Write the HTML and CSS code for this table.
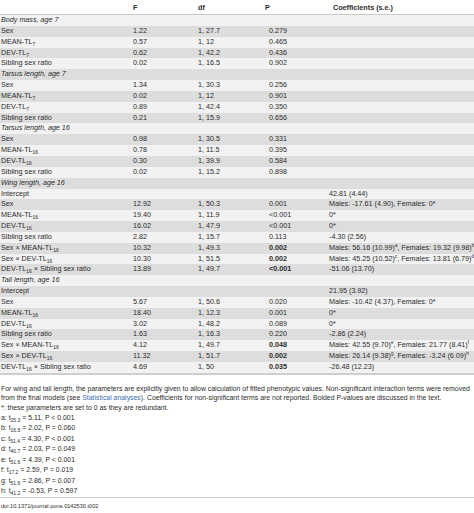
FILE: index.html
```html
<!DOCTYPE html>
<html>
<head>
<meta charset="utf-8">
<link rel="stylesheet" href="styles.css">
</head>
<body>
<div class="table">
  <div class="hdr">
    <div class="c1"></div>
    <div class="c2">F</div>
    <div class="c3">df</div>
    <div class="c4h">P</div>
    <div class="c5h">Coefficients (s.e.)</div>
  </div>
  <div class="rows">
    <div class="row"><div class="c1 sec">Body mass, age 7</div></div>
    <div class="row"><div class="c1">Sex</div><div class="c2">1.22</div><div class="c3">1, 27.7</div><div class="c4">0.279</div><div class="c5"></div></div>
    <div class="row"><div class="c1">MEAN-TL<sub>7</sub></div><div class="c2">0.57</div><div class="c3">1, 12</div><div class="c4">0.465</div><div class="c5"></div></div>
    <div class="row"><div class="c1">DEV-TL<sub>7</sub></div><div class="c2">0.62</div><div class="c3">1, 42.2</div><div class="c4">0.436</div><div class="c5"></div></div>
    <div class="row"><div class="c1">Sibling sex ratio</div><div class="c2">0.02</div><div class="c3">1, 16.5</div><div class="c4">0.902</div><div class="c5"></div></div>
    <div class="row"><div class="c1 sec">Tarsus length, age 7</div></div>
    <div class="row"><div class="c1">Sex</div><div class="c2">1.34</div><div class="c3">1, 30.3</div><div class="c4">0.256</div><div class="c5"></div></div>
    <div class="row"><div class="c1">MEAN-TL<sub>7</sub></div><div class="c2">0.02</div><div class="c3">1, 12</div><div class="c4">0.901</div><div class="c5"></div></div>
    <div class="row"><div class="c1">DEV-TL<sub>7</sub></div><div class="c2">0.89</div><div class="c3">1, 42.4</div><div class="c4">0.350</div><div class="c5"></div></div>
    <div class="row"><div class="c1">Sibling sex ratio</div><div class="c2">0.21</div><div class="c3">1, 15.9</div><div class="c4">0.656</div><div class="c5"></div></div>
    <div class="row"><div class="c1 sec">Tarsus length, age 16</div></div>
    <div class="row"><div class="c1">Sex</div><div class="c2">0.98</div><div class="c3">1, 30.5</div><div class="c4">0.331</div><div class="c5"></div></div>
    <div class="row"><div class="c1">MEAN-TL<sub>16</sub></div><div class="c2">0.78</div><div class="c3">1, 11.5</div><div class="c4">0.395</div><div class="c5"></div></div>
    <div class="row"><div class="c1">DEV-TL<sub>16</sub></div><div class="c2">0.30</div><div class="c3">1, 39.9</div><div class="c4">0.584</div><div class="c5"></div></div>
    <div class="row"><div class="c1">Sibling sex ratio</div><div class="c2">0.02</div><div class="c3">1, 15.2</div><div class="c4">0.898</div><div class="c5"></div></div>
    <div class="row"><div class="c1 sec">Wing length, age 16</div></div>
    <div class="row"><div class="c1">Intercept</div><div class="c2"></div><div class="c3"></div><div class="c4"></div><div class="c5">42.81 (4.44)</div></div>
    <div class="row"><div class="c1">Sex</div><div class="c2">12.92</div><div class="c3">1, 50.3</div><div class="c4">0.001</div><div class="c5">Males: -17.61 (4.90), Females: 0*</div></div>
    <div class="row"><div class="c1">MEAN-TL<sub>16</sub></div><div class="c2">19.40</div><div class="c3">1, 11.9</div><div class="c4">&lt;0.001</div><div class="c5">0*</div></div>
    <div class="row"><div class="c1">DEV-TL<sub>16</sub></div><div class="c2">16.02</div><div class="c3">1, 47.9</div><div class="c4">&lt;0.001</div><div class="c5">0*</div></div>
    <div class="row"><div class="c1">Sibling sex ratio</div><div class="c2">2.82</div><div class="c3">1, 15.7</div><div class="c4">0.113</div><div class="c5">-4.30 (2.56)</div></div>
    <div class="row"><div class="c1">Sex × MEAN-TL<sub>16</sub></div><div class="c2">10.32</div><div class="c3">1, 49.3</div><div class="c4 b">0.002</div><div class="c5">Males: 56.16 (10.99)<sup>a</sup>, Females: 19.32 (9.98)<sup>b</sup></div></div>
    <div class="row"><div class="c1">Sex × DEV-TL<sub>16</sub></div><div class="c2">10.30</div><div class="c3">1, 51.5</div><div class="c4 b">0.002</div><div class="c5">Males: 45.25 (10.52)<sup>c</sup>, Females: 13.81 (6.79)<sup>d</sup></div></div>
    <div class="row"><div class="c1">DEV-TL<sub>16</sub> × Sibling sex ratio</div><div class="c2">13.89</div><div class="c3">1, 49.7</div><div class="c4 b">&lt;0.001</div><div class="c5">-51.06 (13.70)</div></div>
    <div class="row"><div class="c1 sec">Tail length, age 16</div></div>
    <div class="row"><div class="c1">Intercept</div><div class="c2"></div><div class="c3"></div><div class="c4"></div><div class="c5">21.95 (3.92)</div></div>
    <div class="row"><div class="c1">Sex</div><div class="c2">5.67</div><div class="c3">1, 50.6</div><div class="c4">0.020</div><div class="c5">Males: -10.42 (4.37), Females: 0*</div></div>
    <div class="row"><div class="c1">MEAN-TL<sub>16</sub></div><div class="c2">18.40</div><div class="c3">1, 12.3</div><div class="c4">0.001</div><div class="c5">0*</div></div>
    <div class="row"><div class="c1">DEV-TL<sub>16</sub></div><div class="c2">3.02</div><div class="c3">1, 48.2</div><div class="c4">0.089</div><div class="c5">0*</div></div>
    <div class="row"><div class="c1">Sibling sex ratio</div><div class="c2">1.63</div><div class="c3">1, 16.3</div><div class="c4">0.220</div><div class="c5">-2.86 (2.24)</div></div>
    <div class="row"><div class="c1">Sex × MEAN-TL<sub>16</sub></div><div class="c2">4.12</div><div class="c3">1, 49.7</div><div class="c4 b">0.048</div><div class="c5">Males: 42.55 (9.70)<sup>e</sup>, Females: 21.77 (8.41)<sup>f</sup></div></div>
    <div class="row"><div class="c1">Sex × DEV-TL<sub>16</sub></div><div class="c2">11.32</div><div class="c3">1, 51.7</div><div class="c4 b">0.002</div><div class="c5">Males: 26.14 (9.38)<sup>g</sup>, Females: -3.24 (6.09)<sup>h</sup></div></div>
    <div class="row"><div class="c1">DEV-TL<sub>16</sub> × Sibling sex ratio</div><div class="c2">4.69</div><div class="c3">1, 50</div><div class="c4 b">0.035</div><div class="c5">-26.48 (12.23)</div></div>
  </div>
</div>
<div class="notes">
  <p class="lead">For wing and tail length, the parameters are explicitly given to allow calculation of fitted phenotypic values. Non-significant interaction terms were removed</p>
  <p class="lead">from the final models (see <span class="link">Statistical analyses</span>). Coefficients for non-significant terms are not reported. Bolded P-values are discussed in the text.</p>
  <p class="star">*: these parameters are set to 0 as they are redundant.</p>
  <p class="item">a: t<sub>25.3</sub> = 5.11, P &lt; 0.001</p>
  <p class="item">b: t<sub>16.5</sub> = 2.02, P = 0.060</p>
  <p class="item">c: t<sub>51.4</sub> = 4.30, P &lt; 0.001</p>
  <p class="item">d: t<sub>40.7</sub> = 2.03, P = 0.049</p>
  <p class="item">e: t<sub>51.6</sub> = 4.39, P &lt; 0.001</p>
  <p class="item">f: t<sub>17.2</sub> = 2.59, P = 0.019</p>
  <p class="item">g: t<sub>51.6</sub> = 2.86, P = 0.007</p>
  <p class="item">h: t<sub>41.2</sub> = -0.53, P = 0.597</p>
</div>
<div class="doi">doi:10.1371/journal.pone.0142530.t002</div>
</body>
</html>
```
FILE: styles.css
```css
html, body {
  margin: 0;
  padding: 0;
  background: #ffffff;
}
body {
  width: 474px;
  font-family: "Liberation Sans", Arial, sans-serif;
  color: #2b2b2b;
  font-size: 7.2px;
  overflow: hidden;
}
.table {
  width: 474px;
  border-bottom: 2px solid #cfcfcf;
}
.hdr, .row {
  display: grid;
  grid-template-columns: 133px 65px 67px 64px 145px;
  white-space: nowrap;
}
.hdr {
  height: 14px;
  line-height: 15px;
  font-weight: bold;
  border-bottom: 1.5px solid #c8c8c8;
  background: #ffffff;
}
.row {
  height: 10.85px;
  line-height: 10.85px;
  background: #f2f2f2;
}
.row:nth-child(even) {
  background: #dddddd;
}
.row > div, .hdr > div {
  overflow: hidden;
}
.c1 {
  padding-left: 1px;
}
.sec {
  font-style: italic;
  grid-column: 1 / 3;
}
.c4 {
  padding-left: 4px;
}
.c4h {
  padding-left: 0;
}
.c5h {
  padding-left: 4px;
}
.b {
  font-weight: bold;
}
sub {
  font-size: 5px;
  line-height: 0;
  vertical-align: -1.5px;
}
sup {
  font-size: 4.5px;
  line-height: 0;
  vertical-align: 3px;
}
.notes {
  padding-top: 9px;
  font-size: 6.9px;
  padding-left: 1px;
}
.notes p {
  margin: 0;
  white-space: nowrap;
}
.lead {
  line-height: 9.5px;
}
.star {
  line-height: 10px;
}
.item {
  line-height: 10.5px;
}
.link {
  color: #3c6bb4;
}
.doi {
  border-top: 1.5px solid #cfcfcf;
  margin-top: 0.5px;
  font-size: 5.6px;
  line-height: 10px;
  padding-top: 3px;
  padding-left: 1px;
}
```
